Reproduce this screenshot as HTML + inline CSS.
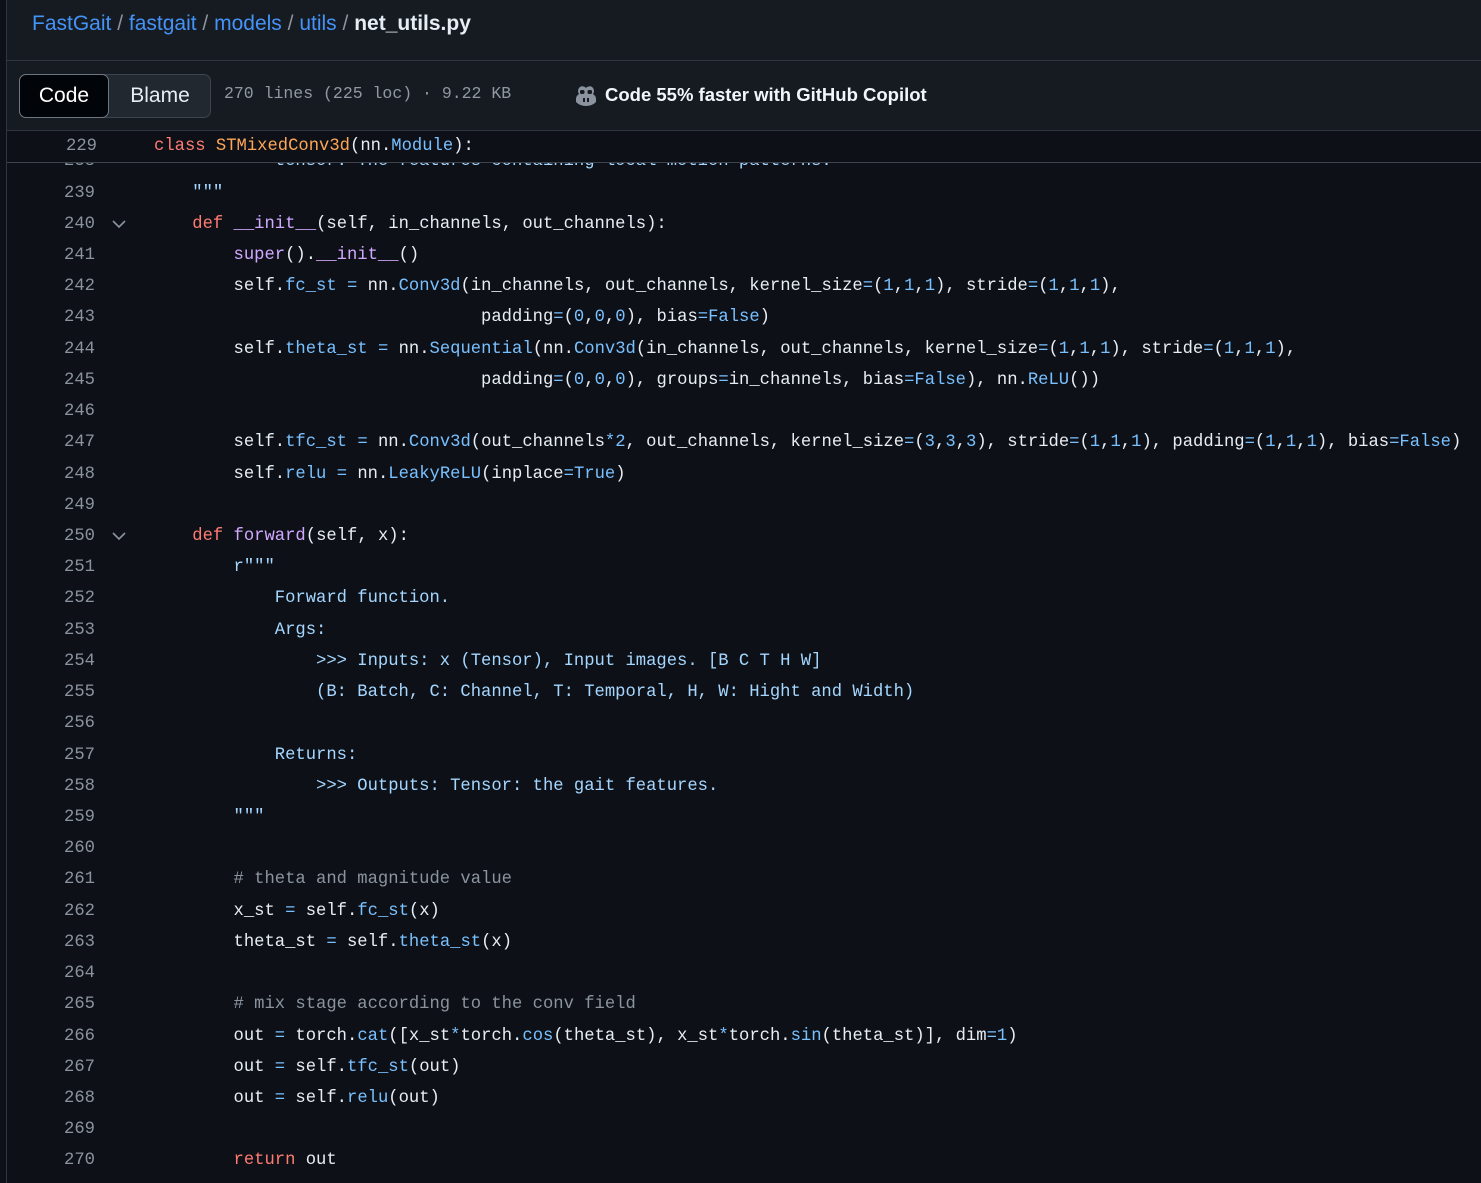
<!DOCTYPE html>
<html><head><meta charset="utf-8"><style>
*{margin:0;padding:0;box-sizing:border-box}
body{width:1481px;height:1183px;background:#0d1117;overflow:hidden;position:relative;font-family:"Liberation Sans",sans-serif;color:#e6edf3}
.top{position:absolute;left:7px;top:0;width:1474px;height:131px;background:#161b22;border-bottom:1px solid #30363d}
.lb{position:absolute;left:6px;top:0;width:1px;height:1183px;background:#30363d}
.crumb{position:absolute;left:32px;top:12px;font-size:21px;color:#8b949e}
.crumb a{color:#4493f8;text-decoration:none}
.crumb b{color:#e6edf3;font-weight:bold}
.hr{position:absolute;left:7px;top:60px;width:1474px;height:1px;background:#30363d}
.seg{position:absolute;left:19px;top:74px;width:192px;height:44px;border:1px solid #3d444d;border-radius:7px;background:#212830}
.code{position:absolute;left:19px;top:74px;width:90px;height:44px;border:1px solid #6e7681;border-radius:7px;background:#010409;color:#fff;font-size:21px;text-align:center;line-height:42px}
.blame{position:absolute;left:110px;top:74px;width:100px;height:44px;color:#e6edf3;font-size:21px;text-align:center;line-height:44px}
.meta{position:absolute;left:224px;top:84px;font-family:"Liberation Mono",monospace;font-size:16.5px;color:#9198a1}
.cop{position:absolute;left:574px;top:84px;font-size:18.5px;font-weight:bold;color:#f0f6fc}
.cop svg{position:absolute;left:0;top:1px}
.sticky{position:absolute;left:7px;top:131px;width:1474px;height:32px;background:#0d1117;border-bottom:1px solid #3d444d;z-index:5}
.ln,.tx{position:absolute;font-family:"Liberation Mono",monospace;font-size:17.2px;line-height:31px;white-space:pre}
.ln{width:95px;text-align:right;left:0;color:#8b949e}
.tx{left:151px;color:#e6edf3}
.k{color:#ff7b72}.t{color:#ffa657}.b{color:#79c0ff}.p{color:#d2a8ff}.s{color:#a5d6ff}.c{color:#8b949e}
.chev{position:absolute;left:111px;width:16px;height:16px}
</style></head><body>
<div class="top"></div>
<div class="lb"></div>
<div class="crumb"><a>FastGait</a> / <a>fastgait</a> / <a>models</a> / <a>utils</a> / <b>net_utils.py</b></div>
<div class="hr"></div>
<div class="seg"></div>
<div class="code">Code</div>
<div class="blame">Blame</div>
<div class="meta">270 lines (225 loc) · 9.22 KB</div>
<div class="cop"><svg width="24" height="22" viewBox="0 0 24 22"><path d="M5 3 Q7 0 11 2 L12 3 L13 2 Q17 0 19 3 Q21 6 19 9 Q22 11 22 14 L22 17 Q18 21 12 21 Q6 21 2 17 L2 14 Q2 11 5 9 Q3 6 5 3Z" fill="#8b949e"/><rect x="6" y="5" width="4.5" height="4" rx="1.5" fill="#161b22"/><rect x="13.5" y="5" width="4.5" height="4" rx="1.5" fill="#161b22"/><rect x="9" y="13" width="2" height="4" fill="#161b22"/><rect x="13" y="13" width="2" height="4" fill="#161b22"/></svg><span style="margin-left:31px">Code 55% faster with GitHub Copilot</span></div>

<div class="sticky">
<div class="ln" style="top:0;width:90px;color:#8b949e">229</div>
<div class="tx" style="top:0;left:147px"><span class="k">class</span> <span class="t">STMixedConv3d</span>(nn.<span class="b">Module</span>):</div>
</div>

<div id="lines"></div>
<div class="ln" style="top:146px">238</div><div class="tx s" style="top:146px">            tensor: The features containing local motion patterns.</div>
<div class="ln" style="top:177.5px">239</div><div class="tx" style="top:177.5px">    <span class="s">"""</span></div>
<div class="ln" style="top:208.7px">240</div><svg class="chev" style="top:216px" viewBox="0 0 16 16"><path d="M2 5 L8 11 L14 5" stroke="#8b949e" stroke-width="1.6" fill="none"/></svg><div class="tx" style="top:208.7px">    <span class="k">def</span> <span class="p">__init__</span>(self, in_channels, out_channels):</div>
<div class="ln" style="top:239.9px">241</div><div class="tx" style="top:239.9px">        <span class="p">super</span>().<span class="p">__init__</span>()</div>
<div class="ln" style="top:271.1px">242</div><div class="tx" style="top:271.1px">        self.<span class="b">fc_st</span> <span class="b">=</span> nn.<span class="b">Conv3d</span>(in_channels, out_channels, kernel_size<span class="b">=</span>(<span class="b">1</span>,<span class="b">1</span>,<span class="b">1</span>), stride<span class="b">=</span>(<span class="b">1</span>,<span class="b">1</span>,<span class="b">1</span>),</div>
<div class="ln" style="top:302.4px">243</div><div class="tx" style="top:302.4px">                                padding<span class="b">=</span>(<span class="b">0</span>,<span class="b">0</span>,<span class="b">0</span>), bias<span class="b">=False</span>)</div>
<div class="ln" style="top:333.6px">244</div><div class="tx" style="top:333.6px">        self.<span class="b">theta_st</span> <span class="b">=</span> nn.<span class="b">Sequential</span>(nn.<span class="b">Conv3d</span>(in_channels, out_channels, kernel_size<span class="b">=</span>(<span class="b">1</span>,<span class="b">1</span>,<span class="b">1</span>), stride<span class="b">=</span>(<span class="b">1</span>,<span class="b">1</span>,<span class="b">1</span>),</div>
<div class="ln" style="top:364.8px">245</div><div class="tx" style="top:364.8px">                                padding<span class="b">=</span>(<span class="b">0</span>,<span class="b">0</span>,<span class="b">0</span>), groups<span class="b">=</span>in_channels, bias<span class="b">=False</span>), nn.<span class="b">ReLU</span>())</div>
<div class="ln" style="top:396px">246</div>
<div class="ln" style="top:427.3px">247</div><div class="tx" style="top:427.3px">        self.<span class="b">tfc_st</span> <span class="b">=</span> nn.<span class="b">Conv3d</span>(out_channels<span class="b">*2</span>, out_channels, kernel_size<span class="b">=</span>(<span class="b">3</span>,<span class="b">3</span>,<span class="b">3</span>), stride<span class="b">=</span>(<span class="b">1</span>,<span class="b">1</span>,<span class="b">1</span>), padding<span class="b">=</span>(<span class="b">1</span>,<span class="b">1</span>,<span class="b">1</span>), bias<span class="b">=False</span>)</div>
<div class="ln" style="top:458.5px">248</div><div class="tx" style="top:458.5px">        self.<span class="b">relu</span> <span class="b">=</span> nn.<span class="b">LeakyReLU</span>(inplace<span class="b">=True</span>)</div>
<div class="ln" style="top:489.7px">249</div>
<div class="ln" style="top:520.9px">250</div><svg class="chev" style="top:528px" viewBox="0 0 16 16"><path d="M2 5 L8 11 L14 5" stroke="#8b949e" stroke-width="1.6" fill="none"/></svg><div class="tx" style="top:520.9px">    <span class="k">def</span> <span class="p">forward</span>(self, x):</div>
<div class="ln" style="top:552.2px">251</div><div class="tx s" style="top:552.2px">        r"""</div>
<div class="ln" style="top:583.4px">252</div><div class="tx s" style="top:583.4px">            Forward function.</div>
<div class="ln" style="top:614.6px">253</div><div class="tx s" style="top:614.6px">            Args:</div>
<div class="ln" style="top:645.8px">254</div><div class="tx s" style="top:645.8px">                &gt;&gt;&gt; Inputs: x (Tensor), Input images. [B C T H W]</div>
<div class="ln" style="top:677.1px">255</div><div class="tx s" style="top:677.1px">                (B: Batch, C: Channel, T: Temporal, H, W: Hight and Width)</div>
<div class="ln" style="top:708.3px">256</div>
<div class="ln" style="top:739.5px">257</div><div class="tx s" style="top:739.5px">            Returns:</div>
<div class="ln" style="top:770.7px">258</div><div class="tx s" style="top:770.7px">                &gt;&gt;&gt; Outputs: Tensor: the gait features.</div>
<div class="ln" style="top:802px">259</div><div class="tx s" style="top:802px">        """</div>
<div class="ln" style="top:833.2px">260</div>
<div class="ln" style="top:864.4px">261</div><div class="tx c" style="top:864.4px">        # theta and magnitude value</div>
<div class="ln" style="top:895.6px">262</div><div class="tx" style="top:895.6px">        x_st <span class="b">=</span> self.<span class="b">fc_st</span>(x)</div>
<div class="ln" style="top:926.9px">263</div><div class="tx" style="top:926.9px">        theta_st <span class="b">=</span> self.<span class="b">theta_st</span>(x)</div>
<div class="ln" style="top:958.1px">264</div>
<div class="ln" style="top:989.3px">265</div><div class="tx c" style="top:989.3px">        # mix stage according to the conv field</div>
<div class="ln" style="top:1020.5px">266</div><div class="tx" style="top:1020.5px">        out <span class="b">=</span> torch.<span class="b">cat</span>([x_st<span class="b">*</span>torch.<span class="b">cos</span>(theta_st), x_st<span class="b">*</span>torch.<span class="b">sin</span>(theta_st)], dim<span class="b">=1</span>)</div>
<div class="ln" style="top:1051.8px">267</div><div class="tx" style="top:1051.8px">        out <span class="b">=</span> self.<span class="b">tfc_st</span>(out)</div>
<div class="ln" style="top:1083px">268</div><div class="tx" style="top:1083px">        out <span class="b">=</span> self.<span class="b">relu</span>(out)</div>
<div class="ln" style="top:1114.2px">269</div>
<div class="ln" style="top:1145.4px">270</div><div class="tx" style="top:1145.4px">        <span class="k">return</span> out</div>
</body></html>
